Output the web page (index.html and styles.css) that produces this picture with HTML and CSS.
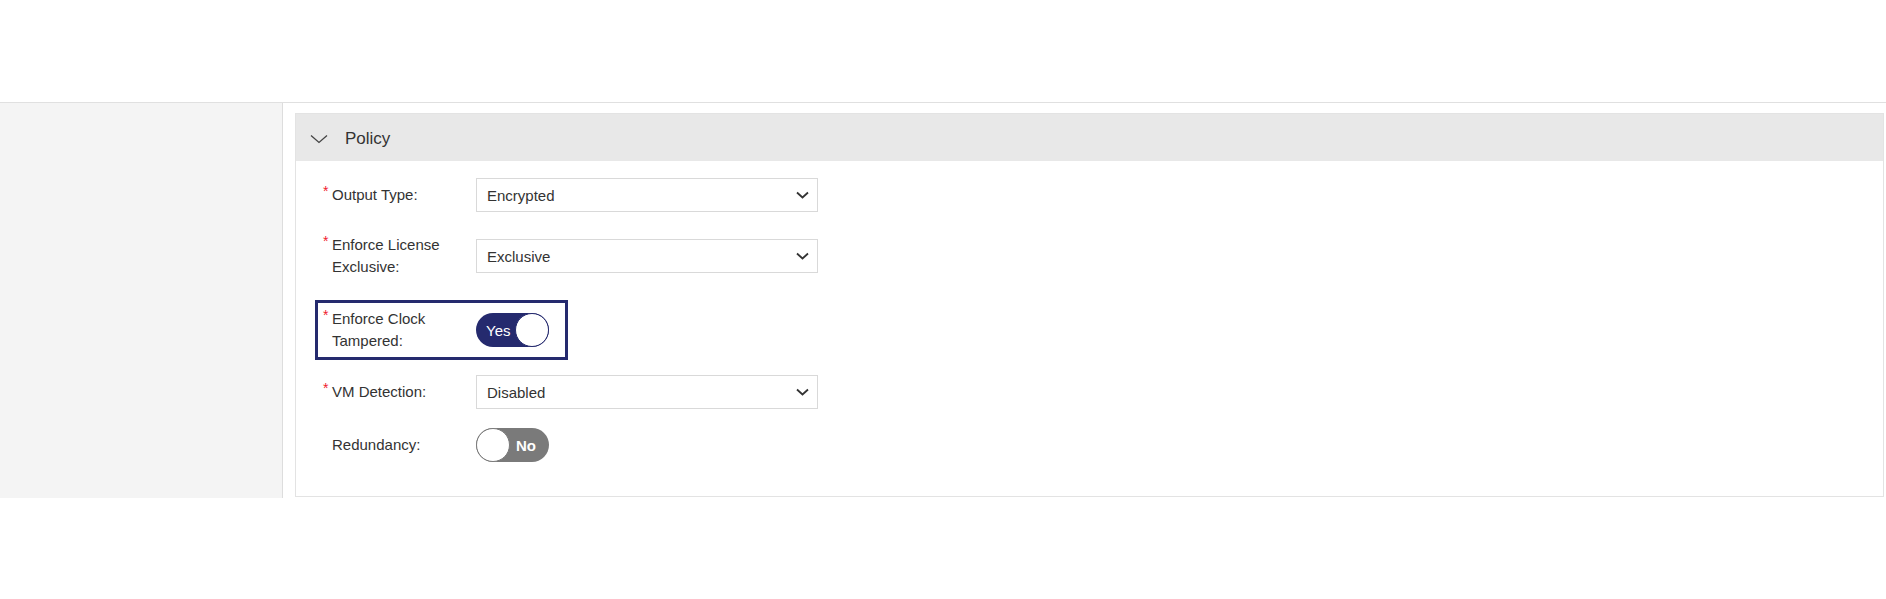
FILE: index.html
```html
<!DOCTYPE html>
<html lang="en">
<head>
<meta charset="utf-8">
<title>Policy</title>
<link rel="stylesheet" href="styles.css">
</head>
<body>
  <header class="topbar"></header>
  <div class="layout">
    <aside class="sidebar"></aside>
    <main class="main">
      <section class="panel">
        <div class="panel-header">
          <svg class="panel-chevron" width="18" height="10" viewBox="0 0 18 10"><polyline points="1,1.5 9,8.5 17,1.5" fill="none" stroke="#444" stroke-width="1.3"/></svg>
          <span class="panel-title">Policy</span>
        </div>
        <div class="panel-body">
          <div class="row row-1">
            <div class="label req">Output Type:</div>
            <div class="select"><span>Encrypted</span><svg width="13" height="8" viewBox="0 0 13 8"><polyline points="1,1.5 6.5,6.5 12,1.5" fill="none" stroke="#333" stroke-width="1.8"/></svg></div>
          </div>
          <div class="row row-2">
            <div class="label req">Enforce License Exclusive:</div>
            <div class="select"><span>Exclusive</span><svg width="13" height="8" viewBox="0 0 13 8"><polyline points="1,1.5 6.5,6.5 12,1.5" fill="none" stroke="#333" stroke-width="1.8"/></svg></div>
          </div>
          <div class="row row-3 row-focus">
            <div class="label req">Enforce Clock Tampered:</div>
            <div class="toggle toggle-on"><span class="toggle-text">Yes</span><span class="knob"></span></div>
          </div>
          <div class="row row-4">
            <div class="label req">VM Detection:</div>
            <div class="select"><span>Disabled</span><svg width="13" height="8" viewBox="0 0 13 8"><polyline points="1,1.5 6.5,6.5 12,1.5" fill="none" stroke="#333" stroke-width="1.8"/></svg></div>
          </div>
          <div class="row row-5">
            <div class="label">Redundancy:</div>
            <div class="toggle toggle-off"><span class="knob"></span><span class="toggle-text">No</span></div>
          </div>
        </div>
      </section>
    </main>
  </div>
</body>
</html>
```

FILE: styles.css
```css
* { box-sizing: border-box; }

html, body {
  margin: 0;
  padding: 0;
  background: #ffffff;
  font-family: "Liberation Sans", Arial, sans-serif;
  font-size: 15px;
  color: #333333;
}

.topbar {
  height: 103px;
  border-bottom: 1px solid #e0e0e0;
  background: #ffffff;
}

.layout {
  display: flex;
}

.sidebar {
  width: 283px;
  flex: 0 0 283px;
  background: #f4f4f4;
  border-right: 1px solid #dddddd;
}

.main {
  flex: 1;
  padding: 10px 2px 1px 12px;
}

.panel {
  border: 1px solid #e3e3e3;
  background: #ffffff;
}

.panel-header {
  height: 47px;
  background: #e8e8e8;
  display: flex;
  align-items: center;
  padding-left: 14px;
  padding-top: 2px;
}

.panel-chevron {
  display: block;
}

.panel-title {
  margin-left: 17px;
  font-size: 17px;
  color: #333333;
}

.panel-body {
  padding: 17px 0 34px 22px;
}

.row {
  display: flex;
  align-items: center;
  width: fit-content;
}

.row-1 { margin-bottom: 22px; min-height: 34px; }
.row-2 { margin-bottom: 25px; min-height: 44px; }
.row-3 { margin-bottom: 18px; }
.row-4 { margin-bottom: 19px; min-height: 34px; }
.row-5 { min-height: 34px; }

.row-focus {
  padding: 5px 16px 5px 0;
  outline: 3px solid #252a6e;
}

.label {
  position: relative;
  width: 158px;
  flex: 0 0 158px;
  padding-left: 14px;
  padding-right: 16px;
  line-height: 22px;
  color: #333333;
}

.label.req::before {
  content: "*";
  position: absolute;
  left: 5px;
  top: -4px;
  color: #f0202d;
  font-size: 14px;
}

.select {
  width: 342px;
  height: 34px;
  border: 1px solid #d9d9d9;
  background: #ffffff;
  display: flex;
  align-items: center;
  justify-content: space-between;
  padding: 0 8px 0 10px;
  color: #333333;
}

.select svg {
  display: block;
}

.toggle {
  width: 73px;
  height: 34px;
  border-radius: 17px;
  display: flex;
  align-items: center;
  justify-content: space-between;
  color: #ffffff;
}

.toggle-on {
  background: #252a6e;
  padding-left: 10px;
}

.toggle-off {
  background: #7a7a7a;
  padding-right: 13px;
}

.toggle-off .toggle-text {
  font-weight: bold;
}

.knob {
  width: 34px;
  height: 34px;
  border-radius: 50%;
  background: #ffffff;
}

.toggle-on .knob {
  border: 1px solid #252a6e;
}

.toggle-off .knob {
  border: 1px solid #7a7a7a;
}
```
